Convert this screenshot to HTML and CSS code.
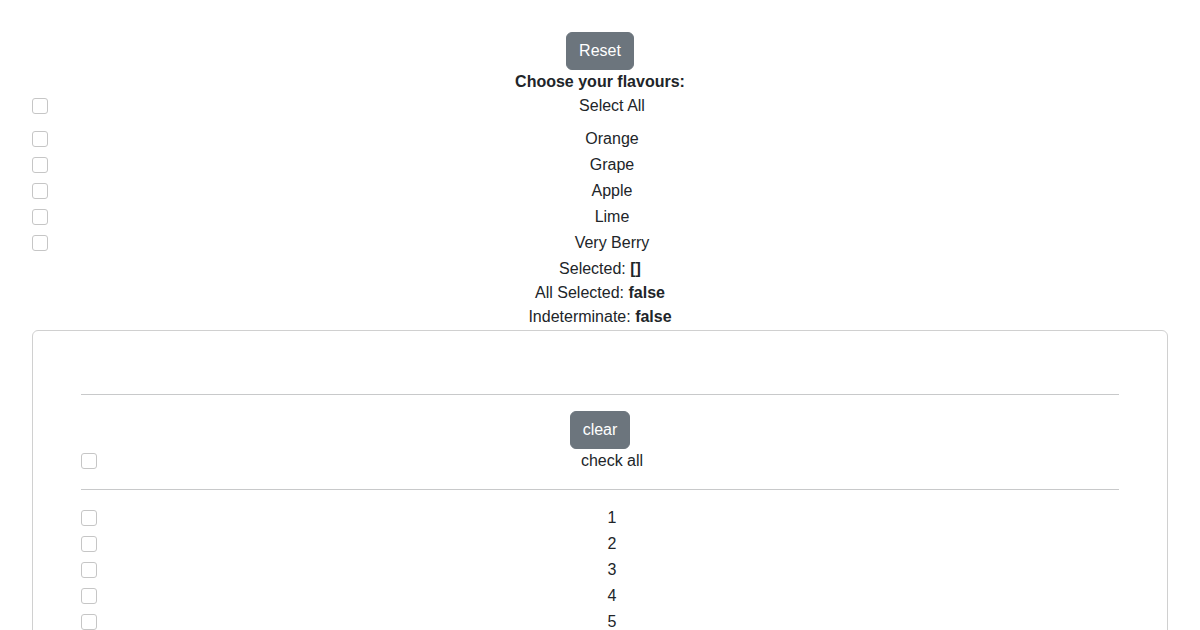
FILE: index.html
```html
<!DOCTYPE html>
<html>
<head>
<meta charset="utf-8">
<link rel="stylesheet" href="styles.css">
</head>
<body>
<div class="page">
  <div class="center"><button class="btn">Reset</button></div>
  <div class="title">Choose your flavours:</div>
  <div class="row all"><span class="cb"></span><span class="lbl">Select All</span></div>
  <div class="row"><span class="cb"></span><span class="lbl">Orange</span></div>
  <div class="row"><span class="cb"></span><span class="lbl">Grape</span></div>
  <div class="row"><span class="cb"></span><span class="lbl">Apple</span></div>
  <div class="row"><span class="cb"></span><span class="lbl">Lime</span></div>
  <div class="row"><span class="cb"></span><span class="lbl">Very Berry</span></div>
  <div class="info">Selected: <b>[]</b></div>
  <div class="info">All Selected: <b>false</b></div>
  <div class="info">Indeterminate: <b>false</b></div>
  <div class="card">
    <hr>
    <div class="center"><button class="btn">clear</button></div>
    <div class="row"><span class="cb"></span><span class="lbl">check all</span></div>
    <hr>
    <div class="row"><span class="cb"></span><span class="lbl">1</span></div>
    <div class="row"><span class="cb"></span><span class="lbl">2</span></div>
    <div class="row"><span class="cb"></span><span class="lbl">3</span></div>
    <div class="row"><span class="cb"></span><span class="lbl">4</span></div>
    <div class="row"><span class="cb"></span><span class="lbl">5</span></div>
    <div class="row"><span class="cb"></span><span class="lbl">6</span></div>
  </div>
</div>
</body>
</html>
```

FILE: styles.css
```css
html, body {
  margin: 0;
  padding: 0;
  background: #fff;
}
body {
  font-family: "Liberation Sans", Arial, sans-serif;
  font-size: 16px;
  line-height: 24px;
  color: #212529;
}
.page {
  padding: 32px;
}
.center {
  display: flex;
  justify-content: center;
}
.btn {
  font-family: inherit;
  font-size: 16px;
  line-height: 24px;
  padding: 6px 12px;
  color: #fff;
  background: #6c757d;
  border: 1px solid #6c757d;
  border-radius: 6px;
  margin: 0;
}
.title {
  text-align: center;
  font-weight: bold;
}
.row {
  display: flex;
  align-items: center;
  height: 24px;
  margin-bottom: 2px;
}
.row.all {
  margin-bottom: 9px;
}
.cb {
  box-sizing: border-box;
  width: 16px;
  height: 16px;
  border: 1px solid #c6c6c6;
  border-radius: 3px;
  margin-right: 8px;
  flex: none;
}
.lbl {
  flex: 1;
  text-align: center;
}
.info {
  text-align: center;
}
.card {
  margin-top: 1px;
  border: 1px solid #d0d0d0;
  border-radius: 6px;
  padding: 47px 48px 48px;
}
hr {
  margin: 16px 0;
  border: 0;
  border-top: 1px solid #c8c9ca;
  height: 0;
}
```
